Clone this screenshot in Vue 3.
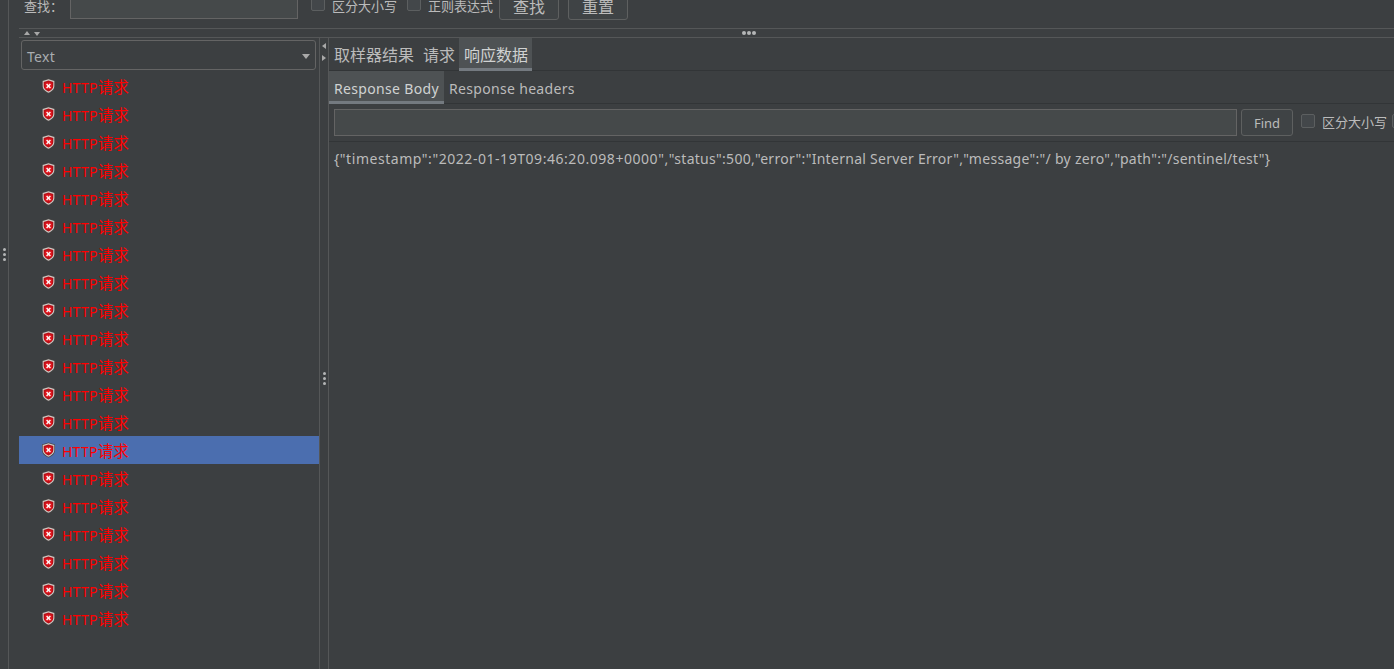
<script setup>
const rows = Array.from({ length: 20 }, (_, i) => i)
const selected = 13
</script>

<template>
  <div class="app">
    <div class="rail">
      <span class="dots column"><i></i><i></i><i></i></span>
    </div>
    <div class="main">
      <div class="toolbar">
        <span class="find-label">查找：</span>
        <div class="top-input"></div>
        <span class="check top-check first"></span>
        <span class="check-text">区分大小写</span>
        <span class="check top-check second"></span>
        <span class="check-text">正则表达式</span>
        <button class="top-btn one">查找</button>
        <button class="top-btn two">重置</button>
      </div>
      <div class="hsplit">
        <span class="tri up"></span>
        <span class="tri down"></span>
        <span class="dots row"><i></i><i></i><i></i></span>
      </div>
      <div class="body">
        <div class="left">
          <div class="select">
            <span>Text</span>
            <span class="caret"></span>
          </div>
          <ul class="tree">
            <li v-for="r in rows" :key="r" class="node" :class="{ on: r === selected }">
              <svg class="shield" width="15" height="16" viewBox="0 0 15 16">
                <path d="M7.5 .4 14 2.5V8C14 11.6 11.2 14.3 7.5 15.6 3.8 14.3 1 11.6 1 8V2.5Z" fill="#4a4645" />
                <path d="M7.5 1.2 13.3 3V8C13.3 11 10.8 13.5 7.5 14.8 4.2 13.5 1.7 11 1.7 8V3Z" fill="#cfcdc8" />
                <path d="M7.5 2.5 12.3 3.9V8C12.3 10.5 10.2 12.5 7.5 13.6 4.8 12.5 2.7 10.5 2.7 8V3.9Z" fill="#b80f16" />
                <rect x="4" y="4.6" width="7" height="6.6" rx="1.5" fill="#e0141c" />
                <path d="M5.6 5.9 9.4 9.9M9.4 5.9 5.6 9.9" stroke="#fff4f4" stroke-width="1.5" />
              </svg>
              <span class="label">HTTP<span class="cjk">请求</span></span>
            </li>
          </ul>
        </div>
        <div class="vsplit">
          <span class="tri left-tri"></span>
          <span class="tri right-tri"></span>
          <span class="dots column"><i></i><i></i><i></i></span>
        </div>
        <div class="right">
          <div class="tabs big">
            <span class="tab">取样器结果</span>
            <span class="tab">请求</span>
            <span class="tab active">响应数据</span>
          </div>
          <div class="tabs small">
            <span class="tab active">Response Body</span>
            <span class="tab">Response headers</span>
          </div>
          <div class="search">
            <div class="search-input"></div>
            <button class="find">Find</button>
            <span class="check"></span>
            <span class="check-text">区分大小写</span>
            <span class="check"></span>
          </div>
          <pre class="response"><span class="stamp">{"timestamp":"2022-01-19T09:46:20.098+0000",</span>"status":500,"error":"Internal Server Error","message":"/ by zero","path":"/sentinel/test"}</pre>
        </div>
      </div>
    </div>
  </div>
</template>

<style>
html, body { margin: 0; background: #3c3f41; overflow: hidden; }
</style>

<style scoped>
.app {
  width: 1394px;
  height: 669px;
  display: flex;
  overflow: hidden;
  background: #3c3f41;
  color: #bbbbbb;
  font: 14px "Noto Sans", "Noto Sans CJK SC", sans-serif;
}
.rail {
  width: 9px;
  flex: none;
  box-sizing: border-box;
  border-right: 1px solid #555758;
  display: flex;
  align-items: center;
  justify-content: center;
  padding-bottom: 161px;
}
.dots { display: flex; gap: 2px; }
.dots.column { flex-direction: column; }
.dots i { width: 3px; height: 3px; border-radius: 50%; background: #b4b6b6; }
.main { flex: 1; min-width: 0; display: flex; flex-direction: column; padding-left: 10px; }
.toolbar {
  height: 29px;
  flex: none;
  display: flex;
  align-items: flex-start;
  box-sizing: border-box;
  white-space: nowrap;
  font-size: 13px;
  border-bottom: 1px solid #555758;
}
.find-label { margin: -3px 0 0 5px; width: 46px; line-height: 19px; }
.top-input {
  width: 226px;
  height: 18px;
  margin-top: -1px;
  background: #45494a;
  border: 1px solid #646464;
}
.check {
  width: 12px;
  height: 12px;
  flex: none;
  border: 1px solid #5c5f60;
  border-radius: 2px;
  background: #43474a;
}
.top-check.first { margin: -3px 7px 0 13px; }
.top-check.second { margin: -3px 7px 0 11px; }
.toolbar .check-text { margin-top: -3px; line-height: 19px; width: 64px; }
.top-btn {
  height: 24px;
  margin-top: -4px;
  padding: 0 0 4px;
  width: 60px;
  border: 1px solid #5e6060;
  border-radius: 3px;
  background: #3f4345;
  color: #bbbbbb;
  font: 16px/18px "Noto Sans CJK SC", sans-serif;
}
.top-btn.one { margin-left: 7px; }
.top-btn.two { margin-left: 9px; }
.hsplit {
  height: 9px;
  flex: none;
  box-sizing: border-box;
  position: relative;
  display: flex;
  justify-content: center;
  align-items: center;
  border-bottom: 1px solid #555758;
  padding-left: 85px;
}
.tri { position: absolute; width: 0; height: 0; border-style: solid; border-color: transparent; }
.tri.up { left: 5px; top: 2px; border-width: 0 3.5px 4px; border-bottom-color: #a8a8a8; }
.tri.down { left: 15px; top: 3px; border-width: 4px 3.5px 0; border-top-color: #a8a8a8; }
.hsplit .dots { gap: 1px; }
.hsplit .dots i { width: 4px; height: 4px; }
.body { flex: 1; min-height: 0; display: flex; }
.left { width: 301px; flex: none; box-sizing: border-box; border-right: 1px solid #555758; }
.select {
  margin: 2px 3px 0 2px;
  height: 30px;
  box-sizing: border-box;
  border: 1px solid #646464;
  border-radius: 3px;
  display: flex;
  align-items: center;
  justify-content: space-between;
  padding: 2px 5px 0 5px;
  font-size: 14px;
  letter-spacing: .3px;
  color: #a9adb0;
}
.caret {
  width: 0; height: 0;
  border-style: solid;
  border-width: 5px 4.5px 0;
  border-color: #a9a9a9 transparent transparent;
}
.tree { list-style: none; margin: 2px 0 0; padding: 0; }
.node {
  height: 28px;
  display: flex;
  align-items: center;
  padding-left: 22px;
  color: #ff0000;
}
.node.on { background: #4b6eaf; }
.shield { flex: none; margin-top: -1px; }
.label { margin-left: 6px; padding-top: 2px; line-height: 26px; white-space: nowrap; letter-spacing: .25px; }
.cjk { font-size: 15.5px; letter-spacing: 0; }
.vsplit {
  width: 9px;
  flex: none;
  box-sizing: border-box;
  border-right: 1px solid #555758;
  position: relative;
  display: flex;
  align-items: center;
  justify-content: center;
  padding-top: 49px;
}
.tri.left-tri { left: 2px; top: 5px; border-width: 3.5px 4px 3.5px 0; border-right-color: #a8a8a8; }
.tri.right-tri { left: 2px; top: 17px; border-width: 3.5px 0 3.5px 4px; border-left-color: #a8a8a8; }
.right { flex: 1; min-width: 0; overflow: hidden; display: flex; flex-direction: column; }
.tabs { display: flex; flex: none; box-sizing: border-box; height: 33px; border-bottom: 1px solid #323537; }
.tabs.big { font-size: 16px; }
.tabs.small { font-size: 14px; letter-spacing: 0.33px; }
.tab { padding: 0 5px; display: flex; align-items: center; height: 33px; box-sizing: border-box; white-space: nowrap; }
.tab.active {
  background: #4e5254;
  color: #d0d2d2;
  border-bottom: 3px solid #747a80;
}
.big .tab { padding-bottom: 1px; }
.big .tab.active { padding: 2px 4px 0 5px; }
.small .tab { padding-top: 1px; }
.small .tab.active { padding-top: 5px; padding-bottom: 0; }
.big .tab:nth-child(2) { padding-left: 4px; padding-right: 4px; }
.search {
  height: 38px;
  flex: none;
  box-sizing: border-box;
  border-bottom: 1px solid #323537;
  display: flex;
  align-items: flex-start;
  padding: 5px 0 0 5px;
  white-space: nowrap;
}
.search-input {
  width: 903px;
  height: 27px;
  flex: none;
  box-sizing: border-box;
  background: #45494a;
  border: 1px solid #646464;
}
.find {
  flex: none;
  margin-left: 4px;
  width: 52px;
  height: 27px;
  padding: 0;
  background: #3f4345;
  border: 1px solid #5e6060;
  border-radius: 3px;
  color: #bbbbbb;
  font: 13px "Noto Sans", sans-serif;
}
.search .check { margin: 5px 0 0 8px; }
.search .check-text { margin: 4px 0 0 7px; font-size: 13px; line-height: 19px; width: 64px; }
.search .check:last-child { margin-left: 6px; }
.response {
  margin: 0;
  padding: 7px 0 0 5px;
  font: 14px/20px "Noto Sans", sans-serif;
  letter-spacing: .287px;
  white-space: pre;
  color: #bbbbbb;
}
.stamp { letter-spacing: .545px; }
</style>
